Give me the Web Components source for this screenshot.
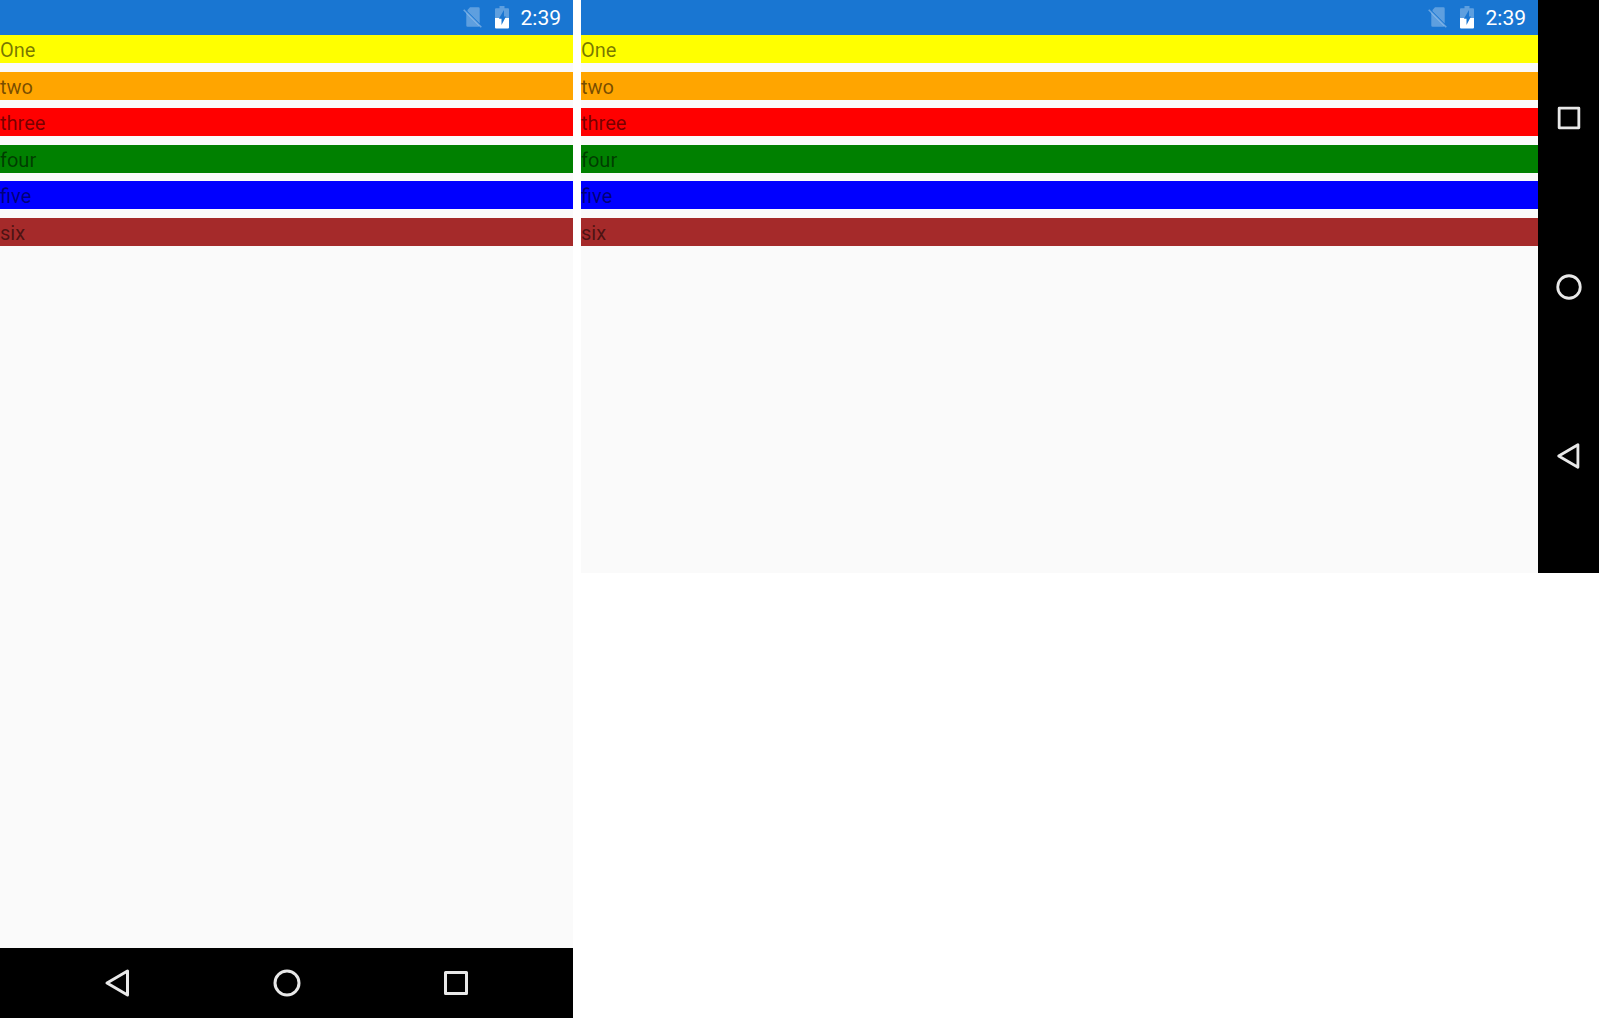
<!DOCTYPE html>
<html lang="en">
<head>
    <meta charset="utf-8">
    <title>Stack layout</title>
    <style>
        body {
            margin: 0;
            background: #ffffff;
            font-family: Roboto, sans-serif;
        }

        main {
            display: grid;
            grid-template-columns: 573fr 1018fr;
            column-gap: 8px;
            align-items: start;
            padding-right: 1px;
        }

        .portrait {
            min-height: 100vh;
        }
    </style>
</head>
<body>
    <main>
        <device-screen class="portrait">
            <status-bar slot="status" time="2:39"></status-bar>
            <color-list>
                <color-row color="#ffff00">One</color-row>
                <color-row color="#ffa500">two</color-row>
                <color-row color="#ff0000">three</color-row>
                <color-row color="#008000">four</color-row>
                <color-row color="#0000ff">five</color-row>
                <color-row color="#a52a2a">six</color-row>
            </color-list>
            <nav-bar slot="nav"></nav-bar>
        </device-screen>
        <device-screen landscape>
            <status-bar slot="status" time="2:39"></status-bar>
            <color-list>
                <color-row color="#ffff00">One</color-row>
                <color-row color="#ffa500">two</color-row>
                <color-row color="#ff0000">three</color-row>
                <color-row color="#008000">four</color-row>
                <color-row color="#0000ff">five</color-row>
                <color-row color="#a52a2a">six</color-row>
            </color-list>
            <nav-bar slot="nav" vertical></nav-bar>
        </device-screen>
    </main>

    <script>
        class DeviceScreen extends HTMLElement {
            constructor() {
                super();

                this.attachShadow({ mode: 'open' });
                this.shadowRoot.innerHTML = /*html*/`
                    <style>
                    :host {
                        display: flex;
                        flex-direction: column;
                        background: #fafafa;
                    }

                    :host([landscape]) {
                        flex-direction: row;
                        aspect-ratio: 1018 / 573;
                    }

                    .content {
                        flex: 1;
                        min-width: 0;
                    }
                    </style>

                    <div class="content">
                        <slot name="status"></slot>
                        <slot></slot>
                    </div>
                    <slot name="nav"></slot>
                `;
            }
        }

        class StatusBar extends HTMLElement {
            constructor() {
                super();

                this.attachShadow({ mode: 'open' });
                this.shadowRoot.innerHTML = /*html*/`
                    <style>
                    :host {
                        display: flex;
                        align-items: center;
                        justify-content: flex-end;
                        height: 35px;
                        padding-right: 12px;
                        background: #1976d2;
                        color: #ffffff;
                    }

                    svg {
                        margin-right: 12px;
                        fill: #ffffff;
                    }

                    time {
                        padding-top: 2px;
                        font-size: 21px;
                        line-height: 33px;
                    }
                    </style>

                    <svg width="20" height="23" viewBox="0 0 20 23" aria-label="No SIM">
                        <path d="M7 1.3H15.5Q16.7 1.3 16.7 2.500V17.500L4.500 5.300V4zM3.300 6.500L16.7 20Q16.500 20.700 15.500 20.700H4.500Q3.300 20.700 3.300 19.500z" fill-opacity=".3"/>
                        <path d="M0.7 3.800L18.300 21.300" stroke="#fff" stroke-opacity=".35" stroke-width="1.600"/>
                    </svg>
                    <svg width="14" height="23" viewBox="0 0 14 23" aria-label="Charging">
                        <path d="M4.500 0H9.500V2.300H13Q14 2.300 14 3.300V12H10.200L11 10.500H9V4L4.300 12H0V3.300Q0 2.300 1 2.300H4.500z" fill-opacity=".3"/>
                        <path d="M0 12H4.300L4 12.700H6.500V19L10.200 12H14V21.500Q14 22.500 13 22.500H1Q0 22.500 0 21.500z"/>
                    </svg>
                    <time></time>
                `;
            }

            connectedCallback() {
                this.shadowRoot.querySelector('time').textContent = this.getAttribute('time');
            }
        }

        class ColorList extends HTMLElement {
            constructor() {
                super();

                this.attachShadow({ mode: 'open' });
                this.shadowRoot.innerHTML = /*html*/`
                    <style>
                    :host {
                        display: flex;
                        flex-direction: column;
                        justify-content: space-between;
                        min-height: 211px;
                    }
                    </style>

                    <slot></slot>
                `;
            }
        }

        class ColorRow extends HTMLElement {
            constructor() {
                super();

                this.attachShadow({ mode: 'open' });
                this.shadowRoot.innerHTML = /*html*/`
                    <style>
                    :host {
                        display: block;
                        padding-top: 2px;
                        font-size: 20px;
                        line-height: 26px;
                        color: rgba(0, 0, 0, 0.54);
                    }
                    </style>

                    <slot></slot>
                `;
            }

            connectedCallback() {
                this.style.backgroundColor = this.getAttribute('color');
            }
        }

        class NavBar extends HTMLElement {
            constructor() {
                super();

                this.attachShadow({ mode: 'open' });
                this.shadowRoot.innerHTML = /*html*/`
                    <style>
                    :host {
                        display: flex;
                        justify-content: center;
                        height: 70px;
                        background: #000000;
                    }

                    :host([vertical]) {
                        flex-direction: column-reverse;
                        width: 61px;
                        height: auto;
                    }

                    button {
                        display: flex;
                        align-items: center;
                        justify-content: center;
                        width: 169px;
                        padding: 0;
                        border: 0;
                        background: none;
                    }

                    :host([vertical]) button {
                        width: 100%;
                        height: 169px;
                    }

                    svg {
                        width: 32px;
                        height: 32px;
                        fill: none;
                        stroke: #e8e8e8;
                        stroke-width: 3;
                        stroke-linejoin: round;
                    }

                    :host([vertical]) svg {
                        width: 30px;
                        height: 30px;
                    }
                    </style>

                    <button type="button" aria-label="Back">
                        <svg viewBox="0 0 32 32"><path d="M25.5 4V28L5 16z"/></svg>
                    </button>
                    <button type="button" aria-label="Home">
                        <svg viewBox="0 0 32 32"><circle cx="16" cy="16" r="12"/></svg>
                    </button>
                    <button type="button" aria-label="Overview">
                        <svg viewBox="0 0 32 32"><path d="M5.5 5.5H26.5V26.5H5.5z"/></svg>
                    </button>
                `;
            }
        }

        window.customElements.define('device-screen', DeviceScreen);
        window.customElements.define('status-bar', StatusBar);
        window.customElements.define('color-list', ColorList);
        window.customElements.define('color-row', ColorRow);
        window.customElements.define('nav-bar', NavBar);
    </script>
</body>
</html>
